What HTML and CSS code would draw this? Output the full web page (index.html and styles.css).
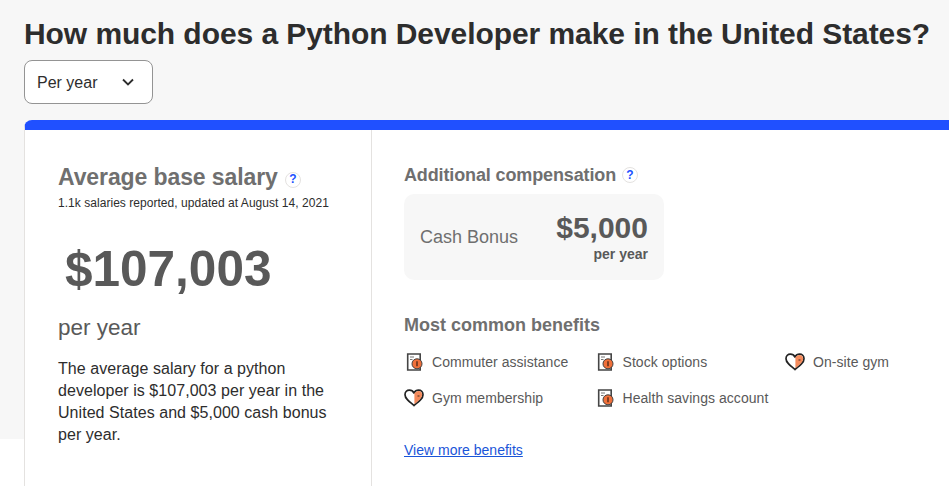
FILE: index.html
```html
<!DOCTYPE html>
<html lang="en">
<head>
  <meta charset="UTF-8" />
  <title>Python Developer salary</title>
  <link rel="stylesheet" href="styles.css">
</head>
<body>
  <svg class="defs" width="0" height="0">
    <symbol id="doc" viewBox="0 0 20 18">
      <path d="M3.700 1h12.500v16h-12.500z" fill="#fff" stroke="#454545" stroke-width="1.600"/>
      <path d="M6 4h4M6 6.500h2.500" stroke="#777" stroke-width="1"/>
      <circle cx="13" cy="10.800" r="5" fill="#f0703a" stroke="#3f3f3f" stroke-width="1"/>
      <path d="M13 8.300v5" stroke="#4a2413" stroke-width="1.300"/>
    </symbol>
    <symbol id="heart" viewBox="0 0 20 18">
      <path d="M10 16.500C5 12.500 1 9.500 1 5.700 1 3 3 1.200 5.400 1.200 7.300 1.200 9 2.200 10 4c1-1.800 2.700-2.800 4.600-2.800C17 1.200 19 3 19 5.700c0 3.800-4 6.800-9 10.800z" fill="#fff" stroke="#222" stroke-width="1.700" stroke-linejoin="round"/>
      <path d="M10.400 15.200V4.600c.9-1.500 2.600-2.500 4.200-2.500 2 0 3.500 1.500 3.500 3.600 0 3.300-3.500 6-7.700 9.500z" fill="#f58b5c"/>
      <path d="M13.500 7h2" stroke="#4b2a1a" stroke-width="1"/>
    </symbol>
  </svg>

  <h1 class="title">How much does a Python Developer make in the United States?</h1>

  <div class="period-select">
    <span class="period-label">Per year</span>
    <svg class="chevron" width="12" height="8" viewBox="0 0 12 8"><path d="M1 1.500l5 5 5-5" fill="none" stroke="#2d2d2d" stroke-width="1.800"/></svg>
  </div>

  <div class="card">
    <div class="salary-panel">
      <h2 class="salary-heading">Average base salary <span class="help">?</span></h2>
      <p class="salary-meta">1.1k salaries reported, updated at August 14, 2021</p>
      <div class="salary-amount">$107,003</div>
      <div class="salary-period">per year</div>
      <p class="salary-text">The average salary for a python developer is $107,003 per year in the United States and $5,000 cash bonus per year.</p>
    </div>

    <div class="extras-panel">
      <h3 class="extras-heading">Additional compensation <span class="help">?</span></h3>
      <div class="bonus">
        <span class="bonus-label">Cash Bonus</span>
        <div class="bonus-value">
          <div class="bonus-amount">$5,000</div>
          <div class="bonus-period">per year</div>
        </div>
      </div>

      <h3 class="extras-heading benefits-heading">Most common benefits</h3>
      <ul class="benefits">
        <li><svg class="benefit-icon"><use href="#doc"/></svg>Commuter assistance</li>
        <li><svg class="benefit-icon"><use href="#doc"/></svg>Stock options</li>
        <li><svg class="benefit-icon"><use href="#heart"/></svg>On-site gym</li>
        <li><svg class="benefit-icon"><use href="#heart"/></svg>Gym membership</li>
        <li><svg class="benefit-icon"><use href="#doc"/></svg>Health savings account</li>
      </ul>
      <a class="more-link" href="#">View more benefits</a>
    </div>
  </div>
</body>
</html>
```

FILE: styles.css
```css
html, body {
  height: 486px;
  overflow: hidden;
}
body {
  margin: 0;
  padding: 16px 0 0 24px;
  box-sizing: border-box;
  font-family: "Liberation Sans", Arial, sans-serif;
  color: #2d2d2d;
  background: linear-gradient(#f7f7f7 439px, #fff 439px);
}
.defs {
  position: absolute;
}
.title {
  margin: 0;
  font-size: 30px;
  line-height: 36px;
  font-weight: bold;
  letter-spacing: -0.07px;
  white-space: nowrap;
}
.period-select {
  display: flex;
  align-items: center;
  justify-content: space-between;
  box-sizing: border-box;
  width: 129px;
  height: 44px;
  margin-top: 8px;
  padding: 0 18px 0 12px;
  background: #fff;
  border: 1px solid #949494;
  border-radius: 8px;
  font-size: 16px;
}
.period-label {
  padding-top: 2px;
}
.card {
  display: flex;
  box-sizing: border-box;
  height: 366px;
  margin-top: 16px;
  background: #fff;
  border-top: 10px solid #2050ff;
  border-left: 1px solid #e4e2e0;
  border-radius: 8px 0 0 0;
}
.salary-panel {
  box-sizing: border-box;
  width: 347px;
  padding: 33px 32px 0 33px;
  border-right: 1px solid #e4e2e0;
}
.salary-heading {
  margin: 0;
  font-size: 23px;
  line-height: 29px;
  letter-spacing: -0.1px;
  color: #6f6f6f;
}
.help {
  display: inline-flex;
  align-items: center;
  justify-content: center;
  box-sizing: border-box;
  width: 16px;
  height: 16px;
  margin-left: 1px;
  vertical-align: 2px;
  border: 1px solid #e4e2e0;
  border-radius: 50%;
  background: #fff;
  color: #2050ff;
  font-size: 12px;
  font-weight: bold;
  letter-spacing: 0;
}
.salary-meta {
  margin: 3px 0 0;
  font-size: 12px;
  line-height: 16px;
  letter-spacing: 0.04px;
}
.salary-amount {
  margin: 30px 0 0 7px;
  font-size: 49.500px;
  line-height: 56px;
  font-weight: bold;
  color: #595959;
}
.salary-period {
  margin-top: 18px;
  font-size: 22.500px;
  line-height: 26px;
  color: #595959;
}
.salary-text {
  margin: 17px 0 0;
  font-size: 16px;
  line-height: 22px;
  letter-spacing: 0.05px;
}
.extras-panel {
  flex: 1;
  padding: 32px 0 0 32px;
}
.extras-heading {
  margin: 0;
  font-size: 18px;
  line-height: 26px;
  letter-spacing: -0.13px;
  color: #6f6f6f;
}
.bonus {
  display: flex;
  align-items: center;
  justify-content: space-between;
  box-sizing: border-box;
  width: 260px;
  height: 86px;
  margin-top: 6px;
  padding: 0 16px;
  background: #f7f7f7;
  border-radius: 10px;
}
.bonus-label {
  font-size: 18px;
  color: #6f6f6f;
}
.bonus-value {
  text-align: right;
}
.bonus-amount {
  font-size: 30px;
  line-height: 31px;
  font-weight: bold;
  color: #595959;
}
.bonus-period {
  margin-top: 2px;
  font-size: 14px;
  line-height: 18px;
  font-weight: bold;
  color: #595959;
}
.benefits-heading {
  margin-top: 32px;
  letter-spacing: 0;
}
.benefits {
  display: grid;
  grid-template-columns: 190.500px 190.500px 1fr;
  row-gap: 16px;
  margin: 14px 0 0;
  padding: 0;
  list-style: none;
  font-size: 14px;
  line-height: 20px;
  letter-spacing: 0.05px;
  color: #595959;
}
.benefits li {
  display: flex;
  align-items: center;
}
.benefit-icon {
  flex: none;
  width: 20px;
  height: 18px;
  margin-right: 8px;
}
.more-link {
  display: block;
  width: fit-content;
  margin-top: 32px;
  font-size: 14px;
  line-height: 20px;
  color: #1a55d8;
}
```
